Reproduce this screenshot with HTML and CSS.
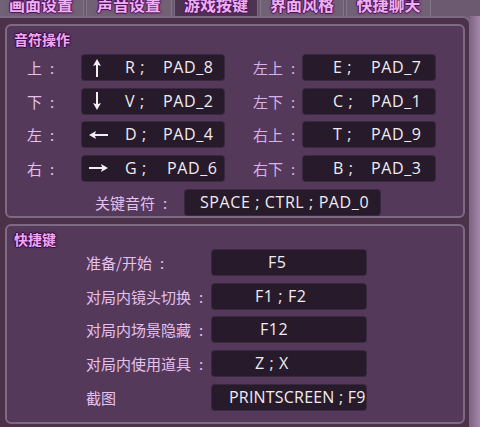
FILE: index.html
```html
<!DOCTYPE html>
<html lang="zh-CN">
<head>
<meta charset="utf-8">
<title>游戏按键</title>
<link rel="stylesheet" href="styles.css">
</head>
<body>
<div class="screen">
  <div class="tabs">
    <div class="tab t1">画面设置</div>
    <div class="tab t2">声音设置</div>
    <div class="tab t3 active">游戏按键</div>
    <div class="tab t4">界面风格</div>
    <div class="tab t5">快捷聊天</div>
  </div>
  <div class="panel">
    <section class="group notes">
      <div class="title">音符操作</div>
      <div class="grid">
        <div class="lbl">上<span class="c">:</span></div>
        <div class="key"><span class="arr"><svg class="av" width="8" height="18" viewBox="0 0 8 18"><path d="M4 0 L8 7 L5 6 L5 18 L3 18 L3 6 L0 7 Z" fill="#f2eef2"/></svg></span><span class="k">R ;</span><span class="p">PAD_8</span></div>
        <div class="lbl l2">左上<span class="c">:</span></div>
        <div class="key k2"><span class="k">E ;</span><span class="p">PAD_7</span></div>

        <div class="lbl">下<span class="c">:</span></div>
        <div class="key"><span class="arr"><svg class="av" width="8" height="18" viewBox="0 0 8 18"><path d="M4 18 L8 11 L5 12 L5 0 L3 0 L3 12 L0 11 Z" fill="#f2eef2"/></svg></span><span class="k">V ;</span><span class="p">PAD_2</span></div>
        <div class="lbl l2">左下<span class="c">:</span></div>
        <div class="key k2"><span class="k">C ;</span><span class="p">PAD_1</span></div>

        <div class="lbl">左<span class="c">:</span></div>
        <div class="key"><span class="arr"><svg class="ah" width="19" height="8" viewBox="0 0 19 8"><path d="M0 4 L7 0 L6 3 L19 3 L19 5 L6 5 L7 8 Z" fill="#f2eef2"/></svg></span><span class="k">D ;</span><span class="p">PAD_4</span></div>
        <div class="lbl l2">右上<span class="c">:</span></div>
        <div class="key k2"><span class="k">T ;</span><span class="p">PAD_9</span></div>

        <div class="lbl">右<span class="c">:</span></div>
        <div class="key"><span class="arr"><svg class="ah" width="19" height="8" viewBox="0 0 19 8"><path d="M19 4 L12 0 L13 3 L0 3 L0 5 L13 5 L12 8 Z" fill="#f2eef2"/></svg></span><span class="k">G ;</span><span class="p p6">PAD_6</span></div>
        <div class="lbl l2">右下<span class="c">:</span></div>
        <div class="key k2"><span class="k">B ;</span><span class="p">PAD_3</span></div>
      </div>
      <div class="mainrow">
        <div class="lbl">关键音符<span class="c">:</span></div>
        <div class="key wide">SPACE ; CTRL ; PAD_0</div>
      </div>
    </section>
    <section class="group hotkeys">
      <div class="title">快捷键</div>
      <div class="list">
        <div class="lbl">准备/开始<span class="c">:</span></div><div class="key hk first">F5</div>
        <div class="lbl">对局内镜头切换<span class="c">:</span></div><div class="key hk">F1 ; F2</div>
        <div class="lbl">对局内场景隐藏<span class="c">:</span></div><div class="key hk short">F12</div>
        <div class="lbl">对局内使用道具<span class="c">:</span></div><div class="key hk">Z ; X</div>
        <div class="lbl">截图</div><div class="key hk long">PRINTSCREEN ; F9</div>
      </div>
    </section>
  </div>
</div>
</body>
</html>
```

FILE: styles.css
```css
* { box-sizing: border-box; }
html, body { margin: 0; padding: 0; }
body {
  font-family: "Noto Sans CJK SC", "Noto Sans", sans-serif;
  background: #9a7ea2;
}
.screen {
  width: 480px;
  height: 427px;
  overflow: hidden;
  display: flex;
  flex-direction: column;
  background: linear-gradient(to right, #7f6586 0, #a487ab 100%);
  background-size: 10px 100%;
  background-position: right top;
  background-repeat: no-repeat;
  background-color: #6f5c74;
}
.tabs {
  display: flex;
  height: 24px;
  margin-top: -8px;
  background: #6c5a70;
  flex: none;
}
.tab {
  height: 24px;
  background: #716175;
  border: 1px solid #857589;
  border-bottom: none;
  color: #eab2f2;
  font-size: 16px;
  font-weight: bold;
  line-height: 22px;
  text-align: center;
  text-shadow: 1px 0 0 #58105e, -1px 0 0 #58105e, 0 1px 0 #58105e, 0 -1px 0 #58105e, 0 0 3px #58105e;
}
.t1 { width: 86px; margin-left: -2px; }
.t2 { width: 86px; margin-left: 2px; }
.t3 { width: 84px; margin-left: 2px; }
.t4 { width: 84px; margin-left: 2px; }
.t5 { width: 85px; margin-left: 2px; }
.tab.active {
  background: #4c3450;
  border-color: #7b6a80;
}
.panel {
  width: 471px;
  flex: 1;
  background: #4b3249;
  border-top: 2px solid #7d6a82;
  border-right: 2px solid #7d6a82;
  border-top-right-radius: 8px;
  padding: 6px 4px 0 5px;
  display: flex;
  flex-direction: column;
  gap: 6px;
}
.group {
  border: 2px solid #7e6b83;
  border-radius: 6px;
  background: #54395a;
}
.notes { height: 194px; }
.hotkeys { height: 200px; }
.title {
  display: inline-block;
  margin: 1px 0 0 7px;
  height: 20px;
  line-height: 20px;
  font-size: 14px;
  font-weight: bold;
  color: #f3a6f4;
  text-shadow: 1px 0 0 #3c0c44, -1px 0 0 #3c0c44, 0 1px 0 #3c0c44, 0 -1px 0 #3c0c44, 0 0 3px #3c0c44;
}
.lbl {
  font-size: 15px;
  line-height: 25px;
  color: #e6c0ee;
  white-space: nowrap;
}
.lbl .c {
  margin-left: 8px;
}
.l2 { color: #dcb0e8; }
.key {
  height: 25px;
  background: #271a2b;
  border-radius: 3px;
  box-shadow: 0 0 0 1px #3a2840;
  color: #f2ecf2;
  font-family: "Open Sans", "Noto Sans", sans-serif;
  font-size: 16px;
  line-height: 25px;
  letter-spacing: 0.6px;
  display: flex;
  align-items: center;
  white-space: nowrap;
}
.grid {
  display: grid;
  grid-template-columns: 55px 142px 29px 50px 132px;
  grid-auto-rows: 25px;
  row-gap: 8.5px;
  margin: 5px 0 0 20px;
}
.grid .l2 { grid-column: 4; }
.grid .k2 { grid-column: 5; padding-left: 30px; }
.arr {
  width: 43px;
  display: flex;
  align-items: center;
  padding-left: 11px;
}
.arr .ah { margin-left: -4px; }
.k { width: 38px; }
.p6 { margin-left: 4px; }
.mainrow {
  display: flex;
  margin: 9px 0 0 88px;
}
.mainrow .lbl { width: 90px; }
.key.wide {
  width: 195px;
  padding-left: 15px;
}
.list {
  display: grid;
  grid-template-columns: 126px 154px;
  grid-auto-rows: 25px;
  row-gap: 8.7px;
  margin: 0 0 0 79px;
}
.key.hk { padding-left: 43px; }
.key.first { padding-left: 56px; }
.key.short { padding-left: 48px; }
.key.long { padding-left: 17px; letter-spacing: 0.2px; }
```
